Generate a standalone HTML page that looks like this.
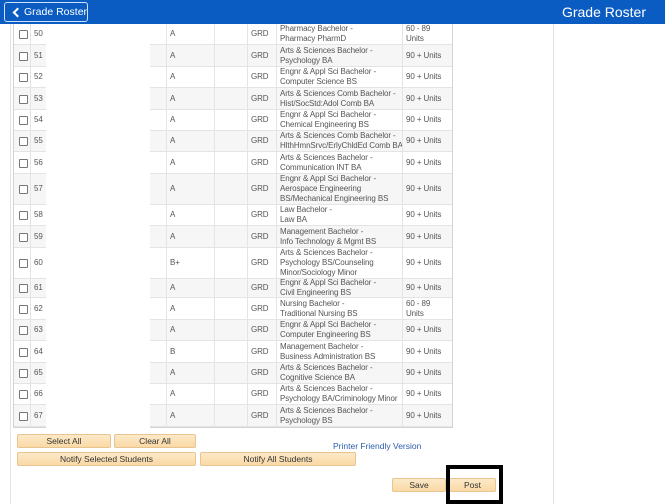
<!DOCTYPE html>
<html><head><meta charset="utf-8"><style>
*{margin:0;padding:0;box-sizing:border-box}
body{width:665px;height:504px;background:#fff;font-family:"Liberation Sans",Arial,sans-serif;position:relative;overflow:hidden;color:#555}
.hdr{position:absolute;left:0;top:0;width:665px;height:24px;background:#0a5cc2}
.back{position:absolute;left:4px;top:2px;width:84px;height:20px;border:1px solid #cfe0f7;border-radius:3px;color:#fff;font-size:10.5px;line-height:18px;padding-left:19px;white-space:nowrap}
.back:before{content:"";position:absolute;left:9px;top:6px;width:5px;height:5px;border-left:2px solid #fff;border-bottom:2px solid #fff;transform:rotate(45deg)}
.title{position:absolute;right:19px;top:4px;color:#fff;font-size:14px}
.vl{position:absolute;top:24px;width:1px;height:480px;background:#e2e2e8}
.tbl{position:absolute;left:13px;top:24px;width:440px;height:404px;border:1px solid #d4d4d4;border-top:none}
.row{position:absolute;left:0;width:438px;border-bottom:1px solid #e4e4e4;font-size:8px;letter-spacing:-0.1px}
.row.g{background:#f6f6f6}
.c{position:absolute;top:0;bottom:0;border-left:1px solid #e4e4e4;display:flex;align-items:center;padding-left:3px;line-height:10px;white-space:nowrap;overflow:hidden}
.cb{position:absolute;left:5px;width:9px;height:9px;border:1px solid #777;border-radius:1px;background:#fff}
.mask{position:absolute;left:46px;top:24px;width:104px;height:404px;background:#fff}
.btn{position:absolute;height:14px;background:linear-gradient(#fde9c8,#f9d9a6);border:1px solid #e9c48f;border-radius:2px;font-size:8.5px;color:#333;text-align:center;line-height:12px;white-space:nowrap}
.link{position:absolute;left:333px;top:441px;font-size:8.5px;color:#2a5db0}
.box{position:absolute;left:446px;top:465px;width:57px;height:39px;border:4px solid #000}
</style></head><body>
<div class="hdr"><div class="back">Grade Roster</div><div class="title">Grade Roster</div></div>
<div class="vl" style="left:10px"></div>
<div class="vl" style="left:553px"></div>
<div class="tbl" id="t"></div>
<div class="mask"></div>
<div class="btn" style="left:17px;top:434px;width:94px">Select All</div>
<div class="btn" style="left:114px;top:434px;width:82px">Clear All</div>
<div class="btn" style="left:17px;top:452px;width:179px">Notify Selected Students</div>
<div class="btn" style="left:200px;top:452px;width:156px">Notify All Students</div>
<div class="link">Printer Friendly Version</div>
<div class="btn" style="left:392px;top:478px;width:54px">Save</div>
<div class="btn" style="left:449px;top:478px;width:47px">Post</div>
<div class="box"></div>
<script>
var d=[
[50,21,"A","Pharmacy Bachelor -<br>Pharmacy PharmD","60 - 89<br>Units"],
[51,22,"A","Arts &amp; Sciences Bachelor -<br>Psychology BA","90 + Units"],
[52,21,"A","Engnr &amp; Appl Sci Bachelor -<br>Computer Science BS","90 + Units"],
[53,22,"A","Arts &amp; Sciences Comb Bachelor -<br>Hist/SocStd:Adol Comb BA","90 + Units"],
[54,21,"A","Engnr &amp; Appl Sci Bachelor -<br>Chemical Engineering BS","90 + Units"],
[55,21,"A","Arts &amp; Sciences Comb Bachelor -<br>HlthHmnSrvc/ErlyChldEd Comb BA","90 + Units"],
[56,22,"A","Arts &amp; Sciences Bachelor -<br>Communication INT BA","90 + Units"],
[57,31,"A","Engnr &amp; Appl Sci Bachelor -<br>Aerospace Engineering<br>BS/Mechanical Engineering BS","90 + Units"],
[58,21,"A","Law Bachelor -<br>Law BA","90 + Units"],
[59,22,"A","Management Bachelor -<br>Info Technology &amp; Mgmt BS","90 + Units"],
[60,31,"B+","Arts &amp; Sciences Bachelor -<br>Psychology BS/Counseling<br>Minor/Sociology Minor","90 + Units"],
[61,19,"A","Engnr &amp; Appl Sci Bachelor -<br>Civil Engineering BS","90 + Units"],
[62,22,"A","Nursing Bachelor -<br>Traditional Nursing BS","60 - 89<br>Units"],
[63,21,"A","Engnr &amp; Appl Sci Bachelor -<br>Computer Engineering BS","90 + Units"],
[64,22,"B","Management Bachelor -<br>Business Administration BS","90 + Units"],
[65,21,"A","Arts &amp; Sciences Bachelor -<br>Cognitive Science BA","90 + Units"],
[66,21,"A","Arts &amp; Sciences Bachelor -<br>Psychology BA/Criminology Minor","90 + Units"],
[67,22,"A","Arts &amp; Sciences Bachelor -<br>Psychology BS","90 + Units"]];
var y=0,h="";
d.forEach(function(r,i){
h+='<div class="row'+(i%2?' g':'')+'" style="top:'+y+'px;height:'+r[1]+'px">'+
'<span class="cb" style="top:'+((r[1]-9)/2)+'px"></span>'+
'<div class="c" style="left:16px;width:16px">'+r[0]+'</div>'+
'<div class="c" style="left:32px;width:120px"></div>'+
'<div class="c" style="left:152px;width:48px">'+r[2]+'</div>'+
'<div class="c" style="left:200px;width:33px"></div>'+
'<div class="c" style="left:233px;width:29px">GRD</div>'+
'<div class="c" style="left:262px;width:126px">'+r[3]+'</div>'+
'<div class="c" style="left:388px;width:50px">'+r[4]+'</div></div>';
y+=r[1];});
document.getElementById('t').innerHTML=h;
</script>
</body></html>
